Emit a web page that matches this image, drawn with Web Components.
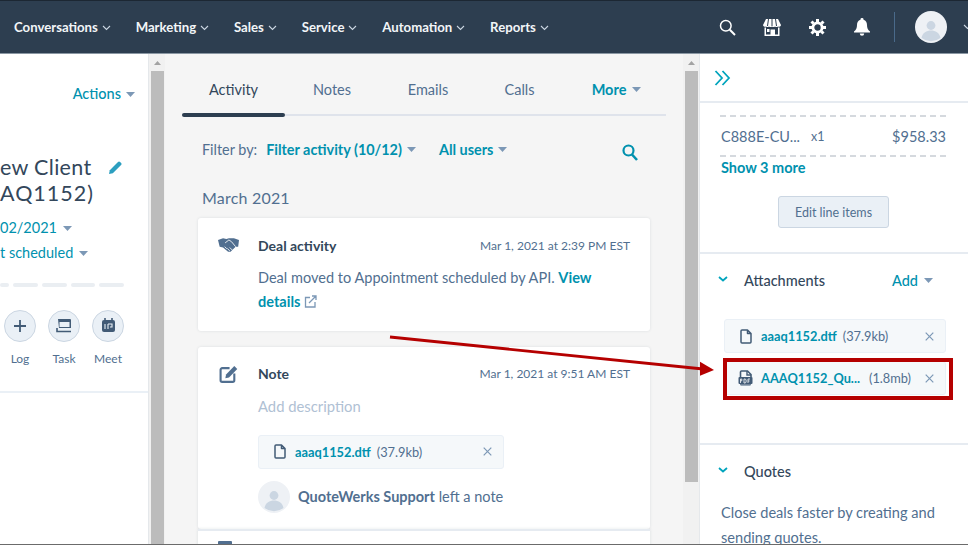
<!DOCTYPE html>
<html><head><meta charset="utf-8"><style>
html,body{margin:0;padding:0;height:545px;overflow:hidden;background:#f5f5f5}
body{font-family:Lato,"Liberation Sans",sans-serif}
</style></head><body>
<app-shell></app-shell>
<script>
const I={
 caret:'<svg width="9" height="5" viewBox="0 0 9 5"><path d="M0 0h9L4.5 5z" fill="currentColor"/></svg>',
 chev:'<svg width="9" height="6" viewBox="0 0 9 6"><path d="M1 1l3.5 3.5L8 1" fill="none" stroke="currentColor" stroke-width="1.1"/></svg>',
 file:'<svg width="12" height="15" viewBox="0 0 12 15"><path d="M1 2a1 1 0 0 1 1-1h5.5L11 4.500V13a1 1 0 0 1-1 1H2a1 1 0 0 1-1-1z M7.500 1v3.500H11" fill="none" stroke="#425b76" stroke-width="1.5" stroke-linejoin="round"/></svg>',
 pdf:'<svg width="15" height="16" viewBox="0 0 15 16"><path d="M2.500 7V2a1 1 0 0 1 1-1h6L13 4.500V7" fill="none" stroke="#425b76" stroke-width="1.6"/><path d="M9 1v4h4" fill="none" stroke="#425b76" stroke-width="1.4"/><rect x="0.5" y="7" width="14" height="7" rx="1" fill="#425b76"/><path d="M2.500 13V9h1.300v1.800H2.500M6 13V9h1a1.200 2 0 0 1 0 4zM10 13V9h2M10 11h1.500" fill="none" stroke="#fff" stroke-width=".8"/><path d="M2.500 14.500v.5h10v-.5" fill="#425b76" stroke="#425b76"/></svg>',
 x:'<svg width="9" height="9" viewBox="0 0 9 9"><path d="M.7.7l7.600 7.600M8.300.7L.7 8.300" stroke="#7c98b6" stroke-width="1.2"/></svg>',
 person:'<svg viewBox="0 0 32 32" width="100%" height="100%"><circle cx="16" cy="16" r="16" fill="#eef1f5"/><circle cx="16" cy="14.500" r="4.400" fill="#cbd6e2"/><path d="M6.500 27c1.200-5.500 5-7.500 9.500-7.500s8.300 2 9.500 7.500A16 16 0 0 1 6.500 27z" fill="#cbd6e2"/></svg>'
};
function tpl(css,html){return `<style>${css}</style>${html}`}
class Base extends HTMLElement{
 constructor(){super();this.attachShadow({mode:'open'});this.shadowRoot.innerHTML=this.render()}
 render(){return ''}
}
customElements.define('top-nav',class extends Base{render(){
 const items=['Conversations','Marketing','Sales','Service','Automation','Reports'];
 return tpl(`:host{display:flex;align-items:center;height:54px;box-sizing:border-box;background:#2d3e50;border-top:1px solid #1c2733;border-bottom:1px solid #8a97a3;color:#fff;padding:0 0 0 14px;overflow:hidden;font-size:13.2px;font-weight:700}
 nav{display:flex;gap:24.8px;flex:1;padding-bottom:1px}
 nav span{display:flex;align-items:center;gap:4px;color:#f2f5f8}
 nav svg{color:#cbd6e2;margin-top:2px}
 .i{display:flex;align-items:center}
 .sep{width:1px;height:30px;background:#4a6a8a;flex:none}
 .av{width:32px;height:32px;margin-left:20px;flex:none}
 .c{margin-left:16px;margin-right:-4px;color:#cbd6e2;flex:none;display:flex}`,
 `<nav>${items.map(t=>`<span>${t}${I.chev}</span>`).join('')}</nav>
 <div class="i" style="margin-right:27px"><svg width="17" height="17" viewBox="0 0 17 17"><circle cx="6.800" cy="6.800" r="5.300" fill="none" stroke="#fff" stroke-width="1.500"/><path d="M10.800 10.800L16 16" stroke="#fff" stroke-width="2"/></svg></div>
 <div class="i" style="margin-right:28px"><svg width="18" height="17" viewBox="0 0 18 17"><path d="M3 0h12l3 6a2 2 0 0 1-3 1.500 2.500 2.500 0 0 1-3 0 2.500 2.500 0 0 1-3 0 2.500 2.500 0 0 1-3 0 2.500 2.500 0 0 1-3 0A2 2 0 0 1 0 6z" fill="#fff"/><path d="M5.500 0L4.500 7M9 0v7M12.500 0l1 7" stroke="#2d3e50" stroke-width="1"/><path d="M1.500 8.500V17h15V8.500h-1.500V15.500h-3v-5H7.500v5H3V8.500z" fill="#fff" fill-rule="evenodd"/><rect x="4" y="10" width="2.500" height="3" fill="#fff"/></svg></div>
 <div class="i" style="margin-right:28px"><svg width="17" height="17" viewBox="0 0 17 17"><circle cx="8.500" cy="8.500" r="4.600" fill="none" stroke="#fff" stroke-width="2.800"/><g stroke="#fff" stroke-width="3"><path d="M8.500 0v3M8.500 14v3M0 8.500h3M14 8.500h3M2.500 2.500l2 2M12.500 12.500l2 2M14.500 2.500l-2 2M4.500 12.500l-2 2"/></g></svg></div>
 <div class="i" style="margin-right:24px"><svg width="16" height="18" viewBox="0 0 16 18"><path d="M8 0a1.500 1.500 0 0 1 1.500 1.700C12 2.400 13 4.500 13 7c0 3 .8 5 3 6.500V14.500H0v-1C2.200 12 3 10 3 7c0-2.500 1-4.600 3.500-5.300A1.500 1.500 0 0 1 8 0z" fill="#fff"/><path d="M5.800 15.500h4.400a2.200 2.200 0 0 1-4.400 0z" fill="#fff"/></svg></div>
 <div class="sep"></div>
 <div class="av">${I.person}</div><span class="c">${I.chev}</span>`)
}});
customElements.define('scroll-bar',class extends Base{render(){
 const t=this.getAttribute('thumb')||'411';
 return tpl(`:host{display:flex;flex-direction:column;align-items:center;width:16px;flex:none;background:#f1f1f1;box-sizing:border-box;height:100%}
 .a{height:17px;display:flex;align-items:center;justify-content:center;color:#a3a3a3}
 .t{width:13px;background:#bcbcbc}`,
 `<div class="a"><svg width="7" height="4" viewBox="0 0 7 4"><path d="M3.500 0L7 4H0z" fill="currentColor"/></svg></div><div class="t" style="height:${t}px"></div>`)
}});
customElements.define('left-panel',class extends Base{render(){
 const act=(g,l)=>`<div class="act"><div class="ci">${g}</div><span>${l}</span></div>`;
 return tpl(`:host{display:flex;flex-direction:column;width:149px;flex:none;background:#fff;height:100%;color:#33475b;overflow:hidden;box-sizing:border-box;border-right:1px solid #e5e8eb}
 .actions{display:flex;justify-content:flex-end;align-items:center;gap:5px;color:#0091ae;font-size:14.5px;font-weight:500;padding:31px 13px 0 0;line-height:18px}
 .actions svg,.d svg{color:#7c98b6}
 h1{margin:0;font-weight:400;font-size:21.5px;line-height:26px;padding-top:51px;color:#33475b;letter-spacing:.3px}
 h1 div{display:flex;align-items:center}
 h1 .l2{letter-spacing:1px}
 h1 svg{margin-left:18px}
 .d{display:flex;align-items:center;gap:6px;color:#0091ae;font-size:14.5px;line-height:18px;height:18px}
 .stage{display:flex;gap:4px;padding-top:21px;width:124px}
 .stage i{height:3.5px;background:#eaeef2;border-radius:2px;flex:1}
 .stage i:first-child{flex:0 0 9px}
 .acts{display:flex;gap:12px;padding:23px 0 0 4px}
 .act{width:32px;display:flex;flex-direction:column;align-items:center;font-size:12px;color:#516f90;gap:9px;line-height:15px}
 .ci{width:32px;height:32px;box-sizing:border-box;border-radius:50%;background:#eaf0f6;border:1px solid #cbd6e2;display:flex;align-items:center;justify-content:center;color:#425b76}
 hr{border:0;border-top:2px solid #eaf0f6;margin:25px 0 0}`,
 `<div class="actions">Actions ${I.caret}</div>
 <h1><div>ew Client<svg width="13" height="13" viewBox="0 0 13 13"><path d="M0 13l.8-3.800L9 1a1.500 1.500 0 0 1 2.100 0l1 1a1.500 1.500 0 0 1 0 2L3.800 12.200z" fill="#2c9fc0"/></svg></div><div class="l2">AQ1152)</div></h1>
 <div class="d" style="margin-top:13px">02/2021 ${I.caret}</div>
 <div class="d" style="margin-top:7px">t scheduled ${I.caret}</div>
 <div class="stage"><i></i><i></i><i></i><i></i><i></i></div>
 <div class="acts">
 ${act('<svg width="14" height="14" viewBox="0 0 14 14"><path d="M7 1v12M1 7h12" stroke="currentColor" stroke-width="1.800"/></svg>','Log')}
 ${act('<svg width="16" height="15" viewBox="0 0 16 15"><path d="M2 1h12a1 1 0 0 1 1 1v8H3z" fill="#425b76"/><rect x="3.500" y="4" width="10" height="5" fill="#eaf0f6"/><path d="M1 10v3.500h14" fill="none" stroke="#425b76" stroke-width="1.600"/></svg>','Task')}
 ${act('<svg width="15" height="15" viewBox="0 0 15 15"><rect x="1" y="2" width="13" height="12" rx="2" fill="#425b76"/><path d="M4 0v3M11 0v3" stroke="#425b76" stroke-width="1.600"/><path d="M4 6v5M7 6v5M7 6h4v3H9" fill="none" stroke="#eaf0f6" stroke-width="1.100"/></svg>','Meet')}
 </div><hr>`)
}});
customElements.define('file-chip',class extends Base{render(){
 const pdf=this.hasAttribute('pdf');
 return tpl(`:host{display:flex;align-items:center;box-sizing:border-box;height:34px;background:#f5f8fa;border:1px solid #eaf0f6;border-radius:3px;font-size:12.8px;color:#516f90}
 .ic{display:flex;align-items:center;justify-content:center;width:22px;margin-left:${pdf?'9':'10'}px}
 a{color:#0091ae;font-weight:700;margin-left:${pdf?'5':'4'}px}
 .s{margin-left:${pdf?'9':'6'}px;flex:1}
 .x{display:flex;margin-right:11px}`,
 `<span class="ic">${pdf?I.pdf:I.file}</span><a>${this.getAttribute('name')}</a><span class="s">(${this.getAttribute('size')})</span><span class="x">${I.x}</span>`)
}});
customElements.define('act-card',class extends Base{render(){
 return tpl(`:host{display:flex;background:#fff;box-sizing:border-box;border-radius:3px;box-shadow:0 0 3px rgba(45,62,80,.12);padding:18px 20px 0 20px;width:452px;gap:19px}
 .ic{width:21px;flex:none;display:flex;justify-content:center}
 .m{flex:1;min-width:0}
 .h{display:flex;justify-content:space-between;align-items:center;height:18px;font-size:14px;font-weight:700;color:#33475b}
 .t{font-size:12px;font-weight:400;color:#516f90}`,
 `<div class="ic"><slot name="icon"></slot></div><div class="m"><div class="h"><span>${this.getAttribute('title')}</span><span class="t">${this.getAttribute('time')}</span></div><slot></slot></div>`)
}});
customElements.define('mid-panel',class extends Base{render(){
 return tpl(`:host{display:flex;flex-direction:column;width:518px;flex:none;background:#f5f5f5;height:100%;overflow:hidden;box-sizing:border-box;padding-left:17px;color:#516f90}
 .tabs{display:flex;width:484px;height:62px;flex:none;box-sizing:border-box;border-bottom:2px solid #dfe3eb;font-size:14.5px}
 .tabs span{display:flex;justify-content:center;align-items:center;height:50px;padding-top:21px;box-sizing:border-box}
 .tabs .on{color:#33475b;position:relative}
 .tabs .on:after{content:"";position:absolute;left:0;width:103px;bottom:-12.5px;height:4px;border-radius:2px;background:#2d3e50}
 .tabs .more{color:#0091ae;font-weight:700;gap:6px;padding-left:6px}
 .tabs svg,.f svg{color:#7c98b6}
 .f{display:flex;align-items:center;height:20px;flex:none;margin:23px 0 0 20px;width:436px;font-size:14.4px;gap:6px}
 .f b{color:#0091ae;font-weight:700;display:flex;align-items:center;gap:5px}
 .mo{font-size:16px;color:#516f90;margin:28px 0 0 20px;line-height:22px;letter-spacing:.2px;flex:none}
 .b{margin:9px 0 0 16px;display:flex;flex-direction:column;gap:16px}
 .p{font-size:14.54px;line-height:24px;margin-top:11.5px;color:#516f90;padding-bottom:17px}
 .p div{height:24px;white-space:nowrap}
 .p a{color:#0091ae;font-weight:700}
 .add{font-size:14.8px;color:#b0c1d4;margin-top:13px;line-height:20px}
 file-chip{width:246px;margin-top:19px}
 .who{display:flex;align-items:center;gap:8px;font-size:14.5px;color:#33475b;margin-top:12px;padding-bottom:16px}
 .who svg{width:32px;height:32px}
 .who b{font-weight:700}
 .who span{color:#516f90}
 .next{margin-top:-16px;width:452px;height:40px;box-sizing:border-box;background:#fff;border-top:2px solid #e6ebf1;padding:10px 0 0 20px;box-shadow:0 0 3px rgba(45,62,80,.12)}
 .next i{display:block;width:14px;height:6px;background:#516f90;border-radius:1px}`,
 `<div class="tabs"><span class="on" style="width:103px">Activity</span><span style="width:94px">Notes</span><span style="width:98px">Emails</span><span style="width:85px">Calls</span><span class="more" style="width:103px">More ${I.caret}</span></div>
 <div class="f">Filter by: <b style="margin-left:3px">Filter activity (10/12) ${I.caret}</b><b style="margin-left:17px">All users ${I.caret}</b>
 <svg style="margin-left:auto;margin-top:6px;color:#0091ae" width="16" height="17" viewBox="0 0 16 17"><circle cx="6.500" cy="6.500" r="5" fill="none" stroke="currentColor" stroke-width="2.200"/><path d="M10 10.500l5 5.500" stroke="currentColor" stroke-width="2.600"/></svg></div>
 <div class="mo">March 2021</div>
 <div class="b">
  <act-card title="Deal activity" time="Mar 1, 2021 at 2:39 PM EST">
   <svg slot="icon" width="25" height="18" viewBox="0 0 25 18"><path d="M0 3L6 1l4 1 3-1h6l6 2-1 8h-3l-4 4-2 2h-3L6 12l-4-1z" fill="#516f90"/><path d="M8.500 6.500L13 3l3 2 5 6M14 12l3 3M11 13l3 3M8 11l2.500 2.500" fill="none" stroke="#fff" stroke-width="1"/></svg>
   <div class="p"><div>Deal moved to Appointment scheduled by API. <a>View</a></div><div><a>details</a> <svg width="13" height="13" viewBox="0 0 13 13" style="vertical-align:-1px"><path d="M6 2.500H1.500v9.500h9.500V7M5 8l7-7M8 1h4v4" fill="none" stroke="#7c98b6" stroke-width="1.300"/></svg></div></div>
  </act-card>
  <act-card title="Note" time="Mar 1, 2021 at 9:51 AM EST">
   <svg slot="icon" width="19" height="19" viewBox="0 0 18 18"><path d="M10 3H3a1.500 1.500 0 0 0-1.500 1.500v10A1.500 1.500 0 0 0 3 16h10a1.500 1.500 0 0 0 1.500-1.500V8" fill="none" stroke="#516f90" stroke-width="2"/><path d="M6 12.500l.7-3.500L14.500 1l2.800 2.800-7.800 8z" fill="#516f90"/></svg>
   <div class="add">Add description</div>
   <file-chip name="aaaq1152.dtf" size="37.9kb"></file-chip>
   <div class="who">${I.person}<span><b>QuoteWerks Support</b> left a note</span></div>
  </act-card>
  <div class="next"><i></i></div>
 </div>`)
}});
customElements.define('right-panel',class extends Base{render(){
 const head=(t,add)=>`<div class="sh"><span class="cv"><svg width="10" height="6" viewBox="0 0 10 6"><path d="M1 1l4 3.500L9 1" fill="none" stroke="#00a4bd" stroke-width="1.800"/></svg></span><span class="st">${t}</span>${add?`<span class="add">Add ${I.caret}</span>`:''}</div>`;
 return tpl(`:host{display:flex;flex-direction:column;flex:1;background:#fff;height:100%;overflow:hidden;box-sizing:border-box;border-left:1px solid #e5e8eb;color:#516f90}
 .top{height:49px;box-sizing:border-box;border-bottom:2px solid #e6ebf1;padding:16px 0 0 14px;flex:none}
 .dash{border-top:2px dashed #d5d9de;margin:12px 22px 0 20px;height:0;flex:none}
 .li{display:flex;align-items:center;margin:9px 22px 0 21px;height:20px;font-size:14.5px;flex:none}
 .li small{font-size:12.5px;margin-left:11px;flex:1}
 .li .pr{font-size:14.5px}
 .show{color:#0091ae;font-weight:700;font-size:14.5px;margin:1px 0 0 21px;line-height:20px;flex:none}
 .btn{margin:18px 0 0 78px;width:111px;height:32px;flex:none;box-sizing:border-box;border:1px solid #cbd6e2;border-radius:3px;background:#eaf0f6;display:flex;align-items:center;justify-content:center;font-size:12.5px;color:#516f90}
 .sec{border-top:2px solid #e6ebf1;margin-top:24px;flex:none}
 .sh{display:flex;align-items:center;height:20px;padding:16px 22px 0 18px;font-size:14.5px;color:#33475b;font-weight:700}
 .cv{width:26px;display:flex;margin-top:-2px}
 .st{flex:1;font-weight:500}
 .add{color:#0091ae;display:flex;align-items:center;gap:6px;font-size:14.5px;margin-right:13px;font-weight:500}
 .add svg{color:#7c98b6}
 .ch{margin:0 23px 0 24px;display:flex;flex-direction:column;gap:8px;padding-top:29px}
 .ch file-chip{width:222px}
 .q{margin-top:48px;border-top:2px solid #e6ebf1;flex:none}
 p{margin:19px 0 0 21px;font-size:14.6px;line-height:25px;width:225px}`,
 `<div class="top"><svg width="17" height="16" viewBox="0 0 17 16"><path d="M1.500 1l6.500 7-6.500 7M8.500 1l6.500 7-6.500 7" fill="none" stroke="#00a4bd" stroke-width="1.800"/></svg></div>
 <div class="dash"></div>
 <div class="li"><span>C888E-CU...</span><small>x1</small><span class="pr">$958.33</span></div>
 <div class="dash" style="margin-top:9px"></div>
 <div class="show">Show 3 more</div>
 <div class="btn">Edit line items</div>
 <div class="sec">${head('Attachments',1)}
  <div class="ch"><file-chip name="aaaq1152.dtf" size="37.9kb"></file-chip><file-chip pdf name="AAAQ1152_Qu..." size="1.8mb"></file-chip></div>
 </div>
 <div class="q">${head('Quotes')}<p>Close deals faster by creating and sending quotes.</p></div>`)
}});
customElements.define('app-shell',class extends Base{render(){
 return tpl(`:host{display:flex;flex-direction:column;width:968px;height:545px;position:relative;overflow:hidden}
 .row{display:flex;flex:1;min-height:0}
 .bot{position:absolute;left:0;right:0;bottom:0;height:1px;background:#6b6b6b}
 .hl{position:absolute;left:723px;top:358px;width:230px;height:42px;box-sizing:border-box;border:4px solid #b50000}
 svg.ar{position:absolute;left:385px;top:330px}`,
 `<top-nav></top-nav><div class="row"><left-panel></left-panel><scroll-bar thumb="473"></scroll-bar><mid-panel></mid-panel><scroll-bar thumb="411"></scroll-bar><right-panel></right-panel></div>
 <div class="hl"></div>
 <svg class="ar" width="340" height="50" viewBox="0 0 340 50"><path d="M5 7L318 39" stroke="#b50000" stroke-width="2.800"/><path d="M329 40L315 31.700v14z" fill="#b50000"/></svg>
 <div class="bot"></div>`)
}});
</script></body></html>
